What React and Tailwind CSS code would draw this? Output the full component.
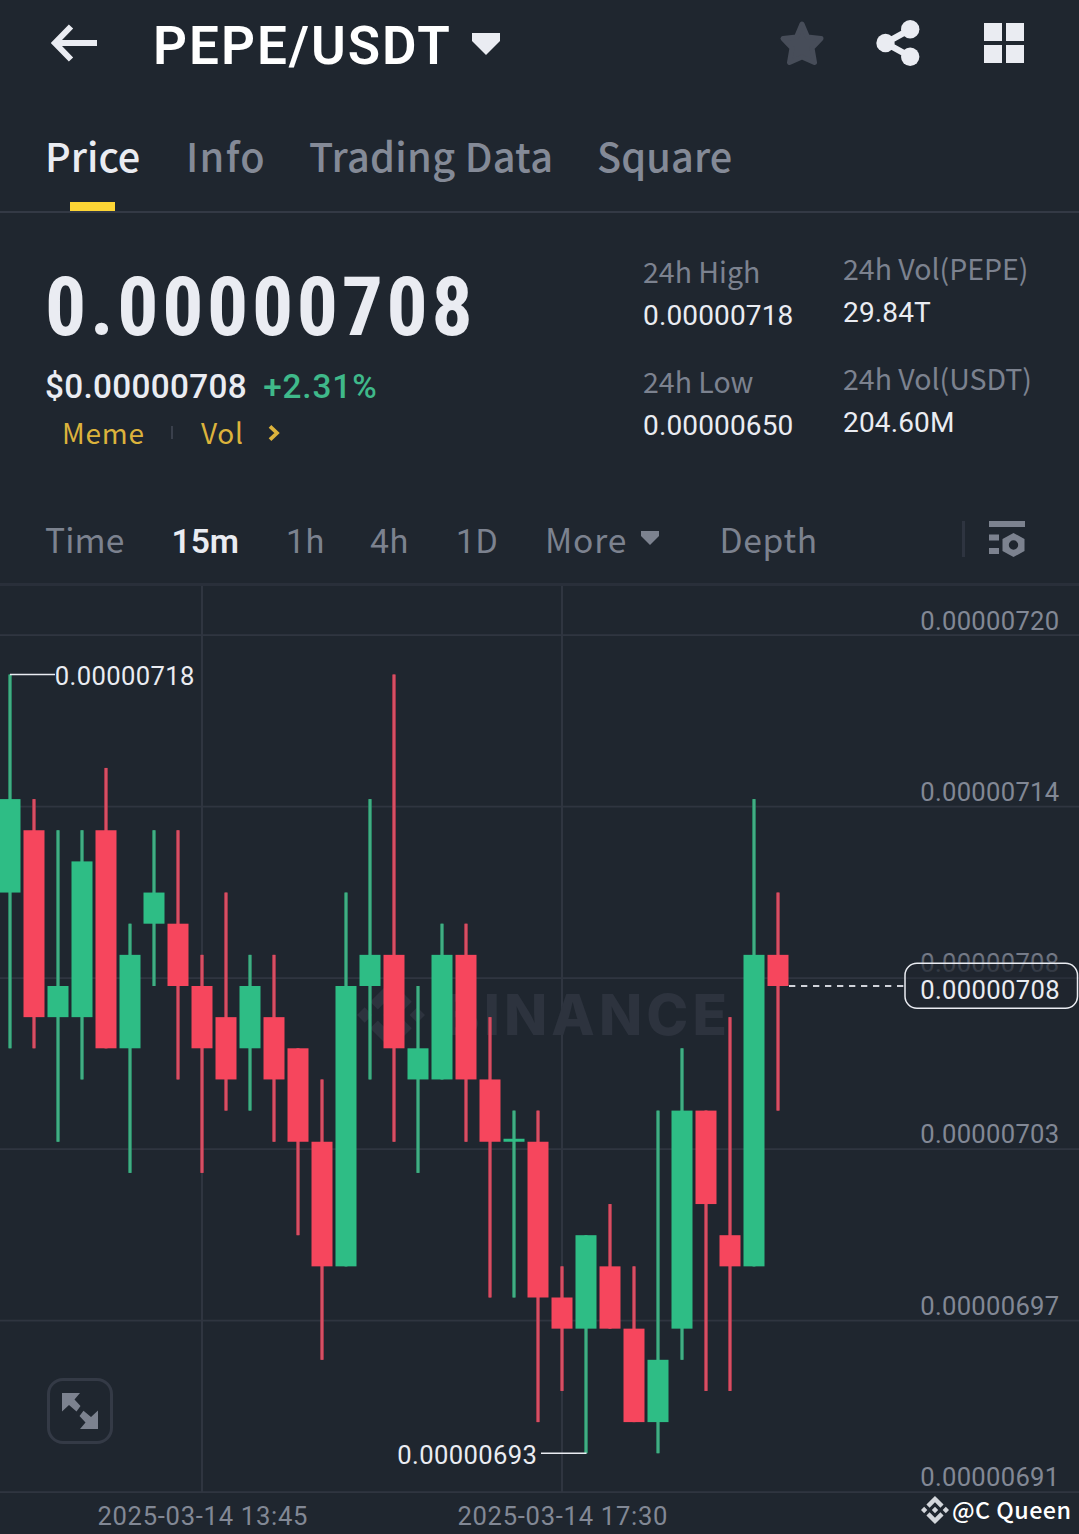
import React from "react";
import { SiBinance } from "react-icons/si";

const GREEN = "#2ebd85";
const RED = "#f6465d";

// [direction, high, body top, body bottom, low] in price ticks below 0.00000718
const CANDLES = [
  ["g", 0, 4, 7, 12], ["r", 4, 5, 11, 12], ["g", 5, 10, 11, 15], ["g", 5, 6, 11, 13],
  ["r", 3, 5, 12, 12], ["g", 8, 9, 12, 16], ["g", 5, 7, 8, 10], ["r", 5, 8, 10, 13],
  ["r", 9, 10, 12, 16], ["r", 7, 11, 13, 14], ["g", 9, 10, 12, 14], ["r", 9, 11, 13, 15],
  ["r", 12, 12, 15, 18], ["r", 13, 15, 19, 22], ["g", 7, 10, 19, 19], ["g", 4, 9, 10, 13],
  ["r", 0, 9, 12, 15], ["g", 10, 12, 13, 16], ["g", 8, 9, 13, 13], ["r", 8, 9, 13, 15],
  ["r", 11, 13, 15, 20], ["g", 14, 15, 15, 20], ["r", 14, 15, 20, 24], ["r", 19, 20, 21, 23],
  ["g", 18, 18, 21, 25], ["r", 17, 19, 21, 21], ["r", 19, 21, 24, 24], ["g", 14, 22, 24, 25],
  ["g", 12, 14, 21, 22], ["r", 14, 14, 17, 23], ["r", 11, 18, 19, 23], ["g", 4, 9, 19, 19],
  ["r", 7, 9, 10, 14],
];
const tickY = (k) => 674.5 + 31.15 * k;

const AXIS = [
  ["0.00000720", 629.7], ["0.00000714", 800.8], ["0.00000703", 1143], ["0.00000697", 1315], ["0.00000691", 1485.8],
];

const WORD = "font-['Noto_Sans_CJK_SC',sans-serif]";
const NUM = "font-['Roboto',sans-serif]";

function Header() {
  return (
    <header className="flex h-[86px] items-center pr-[55px] pl-[51px]">
      <svg width="46" height="38" viewBox="0 0 46 38" fill="none" stroke="#eaecf2" strokeWidth="6">
        <path d="M46 19H4M20 2.5L4 19L20 35.5" />
      </svg>
      <h1 className="ml-[56px] w-[298px] pt-[5px] font-['Roboto',sans-serif] text-[53px] leading-[60px] font-semibold tracking-[2px] whitespace-nowrap text-white">PEPE/USDT</h1>
      <svg className="mt-[2px] ml-[21px]" width="28" height="22" viewBox="0 0 28 22" fill="#eaecf2">
        <path d="M0 0H28V8L14 22L0 8Z" />
      </svg>
      <div className="ml-auto flex items-center">
        <svg width="46" height="46" viewBox="0 0 46 46" fill="#474d59" stroke="#474d59" strokeWidth="5" strokeLinejoin="round">
          <path d="M23 4L28.5 17L42 18.5L33 28L35.5 42.5L23 37L10.5 42.5L13 28L4 18.5L17.5 17Z" />
        </svg>
        <svg className="ml-[51px]" width="44" height="46" viewBox="0 0 44 46" fill="#eaecf2">
          <path d="M9.5 23L34 9.5M9.5 23L34 36.5" stroke="#eaecf2" strokeWidth="6.5" />
          <circle cx="9.5" cy="23" r="9.2" />
          <circle cx="34.2" cy="9.3" r="9.2" />
          <circle cx="34.2" cy="36.7" r="9.2" />
        </svg>
        <div className="ml-[64px] grid grid-cols-2 gap-[4px]">
          {[0, 1, 2, 3].map((i) => (
            <span key={i} className="size-[18px] bg-[#eaecf2]" />
          ))}
        </div>
      </div>
    </header>
  );
}

function Tabs() {
  return (
    <nav className={`${WORD} grid h-[127px] grid-cols-[140px_126px_286px_auto] border-b-2 border-[#333945] pl-[45px] text-[39.7px] leading-[50px] font-medium text-[#848a97]`}>
      <div className="flex flex-col pt-[44px] text-[#eaecf2]">
        Price
        <span className="mt-auto ml-[25px] h-[9px] w-[45px] bg-[#fcd535]" />
      </div>
      <div className="pt-[44px] pl-[1px] tracking-[1.3px]">Info</div>
      <div className="-ml-[2px] pt-[44px] tracking-[0.3px]">Trading Data</div>
      <div className="pt-[44px] tracking-[0.1px]">Square</div>
    </nav>
  );
}

function Stat({ label, value }) {
  return (
    <div className="h-[110px] pl-px">
      <div className={`${WORD} text-[28.5px] leading-[36px] font-normal whitespace-nowrap text-[#7c828f]`}>{label}</div>
      <div className={`${NUM} mt-[9px] text-[28px] leading-[36px] tracking-[0.15px] text-[#eaecf2]`}>{value}</div>
    </div>
  );
}

function Summary() {
  return (
    <section className="flex h-[277px] pl-[45px]">
      <div className="w-[597px] pt-[49px]">
        <div className="font-['Roboto',sans-serif] text-[81.5px] leading-[90px] font-bold tracking-[3.7px] text-[#eaecf2] [font-stretch:75%]">0.00000708</div>
        <div className={`${NUM} mt-[15px] flex gap-[16px] text-[33.3px] leading-[40px] font-medium tracking-[0.33px] text-[#eaecf2]`}>
          <span>$0.00000708</span>
          <span className="tracking-[0.9px] text-[#3fb98a]">+2.31%</span>
        </div>
        <div className={`${WORD} mt-[7px] flex items-center pl-[17px] text-[28px] leading-[37px] text-[#dcb33c]`}>
          <span className="tracking-[0.8px]">Meme</span>
          <span className="mr-[28px] ml-[26px] h-[13px] w-[2px] bg-[#3a404c]" />
          <span className="tracking-[0.7px]">Vol</span>
          <svg className="ml-[24px]" width="13" height="18" viewBox="0 0 13 18" fill="none" stroke="#dcb33c" strokeWidth="3.8">
            <path d="M2 2.3L9 9L2 15.7" />
          </svg>
        </div>
      </div>
      <div className="w-[200px] pt-[40px]">
        <Stat label="24h High" value="0.00000718" />
        <Stat label="24h Low" value="0.00000650" />
      </div>
      <div className="pt-[37px]">
        <Stat label="24h Vol(PEPE)" value="29.84T" />
        <Stat label="24h Vol(USDT)" value="204.60M" />
      </div>
    </section>
  );
}

function Toolbar() {
  return (
    <div className="flex h-[96px] items-center border-b-[3px] border-[#292f3a] pt-[4px] pr-[54px] pl-[45px]">
      <div className={`${WORD} grid grid-cols-[126.5px_114.5px_84px_86px_89px_174.5px_auto] items-baseline pt-[3px] text-[33.6px] leading-[44px] text-[#7c828f]`}>
        <span className="tracking-[0.1px]">Time</span>
        <span className="font-['Roboto',sans-serif] font-semibold text-[#eaecf2]">15m</span>
        <span className="font-['Roboto',sans-serif] tracking-[1px]">1h</span>
        <span className="font-['Roboto',sans-serif] tracking-[1px]">4h</span>
        <span className="font-['Roboto',sans-serif] tracking-[1px]">1D</span>
        <span className="flex items-center tracking-[0.8px]">
          More
          <svg className="mb-[2px] ml-[14px]" width="18" height="14" viewBox="0 0 18 14" fill="#7c828f">
            <path d="M0 0H18V5L9 14L0 5Z" />
          </svg>
        </span>
        <span className="tracking-[0.7px]">Depth</span>
      </div>
      <span className="ml-auto h-[36px] w-[3px] bg-[#2e3440]" />
      <svg className="ml-[24px]" width="36" height="36" viewBox="0 0 36 36" fill="#7c828f">
        <path d="M0 0H36V6H0ZM0 13.5H10V19.5H0ZM0 27H10V33H0Z" />
        <path fillRule="evenodd" d="M24.5 12L35.5 18V30L24.5 36L13.5 30V18ZM24.5 19.3A4.7 4.7 0 1 0 24.5 28.7A4.7 4.7 0 1 0 24.5 19.3Z" />
      </svg>
    </div>
  );
}

function Candle({ index, data }) {
  const [dir, high, top, bottom, low] = data;
  const x = 10 + 24 * index;
  const up = dir === "g";
  const y = top === bottom ? tickY(top) - 3 : tickY(top);
  const h = top === bottom ? 3 : tickY(bottom) - tickY(top);
  const wickY = tickY(high);
  const wickH = tickY(low) - wickY;
  return (
    <g>
      <rect x={x - 1.7} y={wickY} width="3.4" height={wickH} fill={up ? "#2ba877" : "#d63e54"} />
      <rect x={x - 0.7} y={wickY} width="1.4" height={wickH} fill={up ? "#4fae89" : "#d4596b"} />
      <rect x={x - 10.5} y={y} width="21" height={h} fill={up ? GREEN : RED} />
    </g>
  );
}

function Chart() {
  return (
    <div className="relative h-[948px]">
      <svg className={`${NUM} block text-[25.6px]`} width="1079" height="948" viewBox="0 586 1079 948">
        <defs>
          <linearGradient id="fade" gradientUnits="userSpaceOnUse" x1="0" y1="952" x2="0" y2="976">
            <stop offset="0" stopColor="#7c828f" />
            <stop offset="1" stopColor="#2f3540" />
          </linearGradient>
        </defs>
        <g fill="#2f3540">
          {[635, 806.5, 978, 1149, 1320.5, 1492].map((y) => (
            <rect key={y} x="0" y={y - 0.8} width="1079" height="1.8" />
          ))}
          <rect x="201" y="586" width="2" height="906" />
          <rect x="561" y="586" width="2" height="906" />
        </g>
        <SiBinance x="357" y="981" size={68} color="#2d333e" />
        <text x="442" y="1035" textLength="285" className="font-['Inter',sans-serif] text-[56.5px] font-extrabold" fill="#2d333e">BINANCE</text>
        {CANDLES.map((c, i) => (
          <Candle key={i} index={i} data={c} />
        ))}
        <g fill="#828895">
          {AXIS.map(([label, y]) => (
            <text key={label} x="920.2" y={y} textLength="139">{label}</text>
          ))}
          <text x="97.4" y="1525" textLength="210">2025-03-14 13:45</text>
          <text x="457.4" y="1525" textLength="210">2025-03-14 17:30</text>
        </g>
        <text x="920.2" y="972" textLength="139" fill="url(#fade)">0.00000708</text>
        <g stroke="#eaecf2" strokeWidth="1.5" fill="none">
          <path d="M10 674.5H55M541 1453.2H586.5" />
          <path d="M789 986H904" strokeDasharray="6.3 5.7" strokeWidth="1.8" stroke="#d0d3da" />
          <rect x="905" y="963.3" width="172.5" height="45" rx="12" fill="#1f262f" fillOpacity="0.35" />
        </g>
        <g fill="#eaecf2">
          <text x="54.8" y="684.8" textLength="139.5">0.00000718</text>
          <text x="397.3" y="1463.5" textLength="139.5">0.00000693</text>
          <text x="920.2" y="999" textLength="139.5">0.00000708</text>
        </g>
        <SiBinance x="921" y="1496" size={28} color="#d3d6db" />
        <text x="952" y="1519" textLength="119" className="font-['Noto_Sans_CJK_SC',sans-serif] text-[23.3px] font-medium" fill="#fff">@C Queen</text>
      </svg>
      <button type="button" className="absolute top-[792px] left-[47px] grid size-[66px] place-items-center rounded-[16px] border-[3px] border-[#343a46]">
        <svg width="36" height="36" viewBox="0 0 36 36" fill="#7c828f">
          <path d="M0 0H18L12.5 6.5L18.5 13L14.5 18.5L7 12L0 18.5ZM36 36H18L23.5 29.5L17.5 23L21.5 17.8L29 24L36 17.5Z" />
        </svg>
      </button>
    </div>
  );
}

export default function App() {
  return (
    <main className="h-[1534px] w-[1079px] overflow-hidden bg-[#1f262f]">
      <Header />
      <Tabs />
      <Summary />
      <Toolbar />
      <Chart />
    </main>
  );
}
